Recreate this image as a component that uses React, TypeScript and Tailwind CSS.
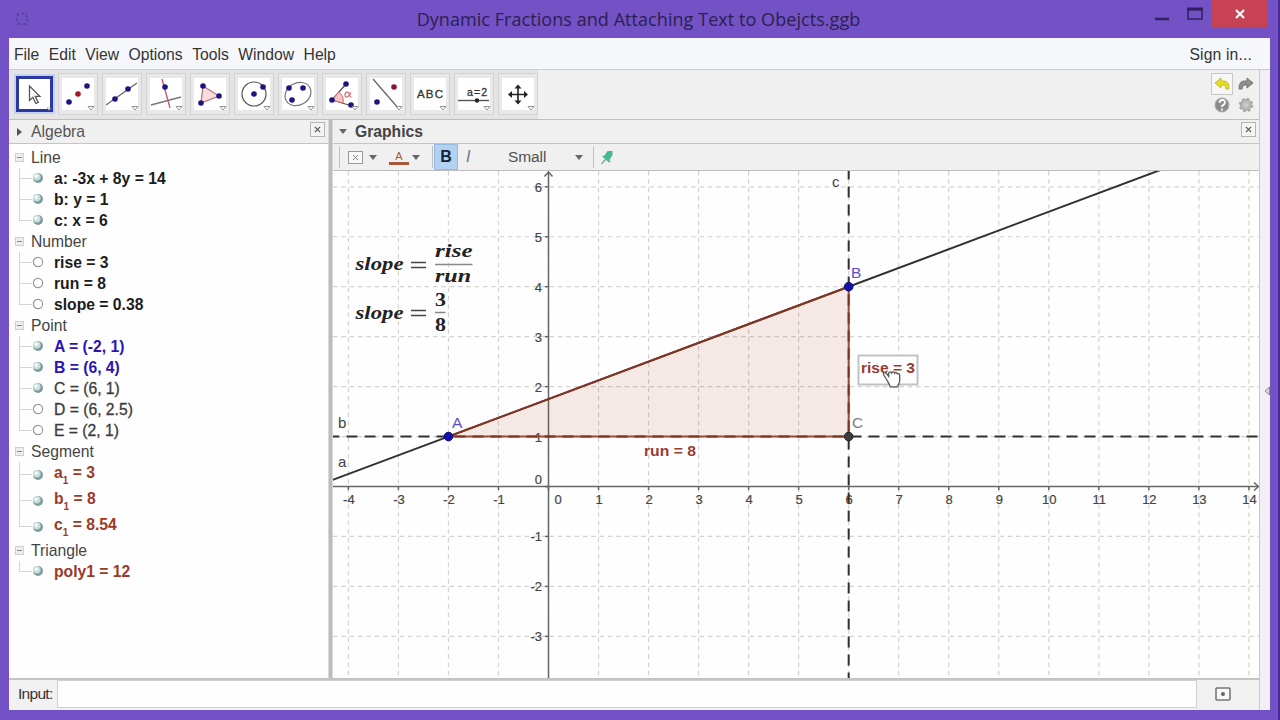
import type { ReactNode } from "react";

type Item = { label: ReactNode; tone: string; shown: boolean; tall?: boolean };
type Group = { title: string; items: Item[] };

const BLACK = "font-bold text-[#1c1c1c]";
const BLUE = "font-bold text-[#2a14b4]";
const GRAY = "text-[#3c3c3c] [-webkit-text-stroke:0.3px_#3c3c3c]";
const RED = "font-bold text-[#9a3a28]";

function Sub({ name, value }: { name: string; value: string }) {
  return (
    <span className="relative -top-0.5">
      {name}
      <span className="relative top-1.5 text-[10px]">1</span> = {value}
    </span>
  );
}

const groups: Group[] = [
  {
    title: "Line",
    items: [
      { label: "a: -3x + 8y = 14", tone: BLACK, shown: true },
      { label: "b: y = 1", tone: BLACK, shown: true },
      { label: "c: x = 6", tone: BLACK, shown: true },
    ],
  },
  {
    title: "Number",
    items: [
      { label: "rise = 3", tone: BLACK, shown: false },
      { label: "run = 8", tone: BLACK, shown: false },
      { label: "slope = 0.38", tone: BLACK, shown: false },
    ],
  },
  {
    title: "Point",
    items: [
      { label: "A = (-2, 1)", tone: BLUE, shown: true },
      { label: "B = (6, 4)", tone: BLUE, shown: true },
      { label: "C = (6, 1)", tone: GRAY, shown: true },
      { label: "D = (6, 2.5)", tone: GRAY, shown: false },
      { label: "E = (2, 1)", tone: GRAY, shown: false },
    ],
  },
  {
    title: "Segment",
    items: [
      { label: <Sub name="a" value="3" />, tone: RED, shown: true, tall: true },
      { label: <Sub name="b" value="8" />, tone: RED, shown: true, tall: true },
      { label: <Sub name="c" value="8.54" />, tone: RED, shown: true, tall: true },
    ],
  },
  {
    title: "Triangle",
    items: [{ label: "poly1 = 12", tone: RED, shown: true }],
  },
];

const menus = ["File", "Edit", "View", "Options", "Tools", "Window", "Help"];

function Dot({ x, y, fill = "#1c1480" }: { x: number; y: number; fill?: string }) {
  return <circle cx={x} cy={y} r="2.8" fill={fill} />;
}

// Each tool is drawn on a 32x32 canvas
const tools: { name: string; art: ReactNode }[] = [
  {
    name: "Move",
    art: (
      <path
        d="M11.5 8v14.5l3.4-3.2 2.9 6.2 2.4-1.1-2.9-6.1h4.6z"
        fill="#fff"
        stroke="#555"
        strokeWidth="1.3"
      />
    ),
  },
  {
    name: "Point",
    art: (
      <>
        <Dot x={7} y={24} />
        <Dot x={16} y={16} fill="#a01830" />
        <Dot x={25} y={8} />
      </>
    ),
  },
  {
    name: "Line",
    art: (
      <>
        <path d="M0 27L31 5" stroke="#666" strokeWidth="1.3" />
        <Dot x={9} y={21} />
        <Dot x={22} y={11} />
      </>
    ),
  },
  {
    name: "Perpendicular Line",
    art: (
      <>
        <path d="M1 27L31 19" stroke="#777" strokeWidth="1.3" />
        <path d="M12 1l8 29" stroke="#c8506a" strokeWidth="1.3" />
        <Dot x={15} y={9} />
      </>
    ),
  },
  {
    name: "Polygon",
    art: (
      <>
        <path d="M9 8l16 10L7 25z" fill="#fadcdc" stroke="#b87880" strokeWidth="1.3" />
        <Dot x={9} y={8} />
        <Dot x={25} y={18} />
        <Dot x={7} y={25} />
      </>
    ),
  },
  {
    name: "Circle",
    art: (
      <>
        <circle cx="16" cy="16" r="12" fill="none" stroke="#555" strokeWidth="1.2" />
        <Dot x={16} y={16} />
        <Dot x={25} y={9} />
      </>
    ),
  },
  {
    name: "Ellipse",
    art: (
      <>
        <ellipse
          cx="16"
          cy="16"
          rx="13.5"
          ry="11"
          fill="none"
          stroke="#777"
          strokeWidth="1.2"
          transform="rotate(-30 16 16)"
        />
        <Dot x={7} y={10} />
        <Dot x={21} y={10} />
        <Dot x={10} y={22} />
      </>
    ),
  },
  {
    name: "Angle",
    art: (
      <>
        <path d="M6 22L20 6M6 22l20 6" stroke="#555" strokeWidth="1.3" />
        <path d="M6 22l7-8a11 11 0 0 1 4 11z" fill="#f6c4c4" stroke="#d07070" />
        <path d="M25 14.500c-2 5-6 6-6 2.500s4-4 4.500 0q.3 2 2 2" fill="none" stroke="#d07070" strokeWidth="1.2" />
        <Dot x={20} y={6} />
        <Dot x={6} y={22} />
        <Dot x={25} y={27} />
      </>
    ),
  },
  {
    name: "Reflect",
    art: (
      <>
        <path d="M3 1l26 30" stroke="#666" strokeWidth="1.3" />
        <Dot x={24} y={9} fill="#8c1430" />
        <Dot x={7} y={24} />
      </>
    ),
  },
  {
    name: "Text",
    art: (
      <text
        x="3"
        y="20"
        fontSize="11.5"
        fill="#333"
        stroke="#333"
        strokeWidth="0.3"
        textLength="26"
        fontFamily="Liberation Sans, sans-serif"
      >
        ABC
      </text>
    ),
  },
  {
    name: "Slider",
    art: (
      <>
        <text
          x="9"
          y="18"
          fontSize="10.5"
          fill="#333"
          stroke="#333"
          strokeWidth="0.3"
          textLength="20"
          fontFamily="Liberation Sans, sans-serif"
        >
          a=2
        </text>
        <path d="M0 22.5h31" stroke="#555" strokeWidth="1.4" />
        <circle cx="19" cy="22.5" r="2.2" fill="#222" />
      </>
    ),
  },
  {
    name: "Move Graphics View",
    art: (
      <>
        <path d="M16 10v13M9.500 16.500h13" stroke="#222" strokeWidth="1.6" />
        <path
          d="M16 6.500l3.500 4h-7zM16 26.500l3.500-4h-7zM6 16.500l4-3.500v7zM26 16.500l-4-3.500v7z"
          fill="#222"
        />
      </>
    ),
  },
];

function ToolButton({ name, art, active }: { name: string; art: ReactNode; active: boolean }) {
  return (
    <button
      type="button"
      aria-label={name}
      className={
        active
          ? "relative flex h-[36px] w-[37px] items-center justify-center border-[3px] border-[#2b38a0] bg-white outline-2 outline-[#c3d0ef]"
          : "relative flex h-[42px] w-[40px] items-center justify-center border border-[#d2d2d2] bg-[#e9e9e9]"
      }
    >
      <svg viewBox="0 0 32 32" className={active ? "h-8 w-8 shrink-0" : "h-8 w-8 shrink-0 bg-white"} fill="none">
        {art}
      </svg>
      <svg
        viewBox="0 0 8 6"
        className={
          active ? "absolute right-[-2px] bottom-[-2px] h-1 w-1.5" : "absolute right-0.5 bottom-[3px] h-1.5 w-2"
        }
      >
        <path d="M1 1.500h6L4 5z" fill="#fff" stroke="#888" strokeWidth="0.9" />
      </svg>
    </button>
  );
}

function CloseBox() {
  return (
    <span className="flex h-[15px] w-[15px] items-center justify-center border border-[#b4b4b4] bg-[#f4f4f4]">
      <svg viewBox="0 0 8 8" className="h-[7px] w-[7px]">
        <path d="M1 1l6 6M7 1L1 7" stroke="#555" strokeWidth="1.4" />
      </svg>
    </span>
  );
}

function Caret() {
  return (
    <svg viewBox="0 0 8 5" className="h-[5px] w-2">
      <path d="M0 0h8L4 5z" fill="#666" />
    </svg>
  );
}

function Marble({ on }: { on: boolean }) {
  return (
    <svg viewBox="0 0 12 12" className="h-3 w-3">
      {on ? (
        <>
          <circle cx="6" cy="6" r="5" fill="#7d9c9e" />
          <circle cx="4.800" cy="4.800" r="3.800" fill="#c9dcdc" />
          <circle cx="4.200" cy="4.200" r="1.800" fill="#f4fafa" />
        </>
      ) : (
        <circle cx="6" cy="6" r="4.600" fill="#fff" stroke="#999" strokeWidth="1.200" />
      )}
    </svg>
  );
}

function AlgebraTree() {
  return (
    <div className="flex flex-1 flex-col bg-[#fefefe] pt-[3px] text-[15.7px]">
      {groups.map((group) => (
        <div key={group.title}>
          <div className="flex h-[21px] items-center pl-1.5 text-[#444]">
            <span className="flex h-[9px] w-[9px] items-center justify-center border border-[#cfcfcf] bg-[#eee]">
              <span className="h-px w-[5px] bg-[#888]" />
            </span>
            <span className="pl-[7px]">{group.title}</span>
          </div>
          {group.items.map((item, i) => (
            <div key={i} className={item.tall ? "flex h-[26px]" : "flex h-[21px]"}>
              <div className="flex w-[23px] flex-col pl-[10px]">
                <div className="h-1/2 border-b border-l border-[#d4d4d4]" />
                <div className={i < group.items.length - 1 ? "h-1/2 border-l border-[#d4d4d4]" : "h-1/2"} />
              </div>
              <div className="flex items-center pb-px">
                <Marble on={item.shown} />
              </div>
              <div className={`flex items-center whitespace-pre pl-[10px] ${item.tone}`}>
                <span>{item.label}</span>
              </div>
            </div>
          ))}
        </div>
      ))}
    </div>
  );
}

const px = (x: number) => 548.5 + x * 50.03;
const py = (y: number) => 486.5 - y * 49.95;
const range = (from: number, to: number) => Array.from({ length: to - from + 1 }, (_, i) => from + i);

const SERIF = "Liberation Serif, serif";

function Fitted({ x, y, width, children }: { x: number; y: number; width: number; children: string }) {
  return (
    <text x={x} y={y} textLength={width} lengthAdjust="spacingAndGlyphs">
      {children}
    </text>
  );
}

function Plot() {
  const A = [px(-2), py(1)];
  const B = [px(6), py(4)];
  const C = [px(6), py(1)];
  return (
    <svg
      viewBox="333 171 926 507"
      className="block h-[507px] w-[926px] bg-[#fefefe]"
      fontFamily="Liberation Sans, sans-serif"
    >
      <g stroke="#d2d2d2" strokeWidth="1.2" strokeDasharray="4.5 3.83">
        {range(-4, 14).map((x) => (
          <path key={x} d={`M${px(x)} 171V678`} />
        ))}
        {range(-3, 6).map((y) => (
          <path key={y} d={`M333 ${py(y)}H1259`} />
        ))}
      </g>

      {/* axes */}
      <g stroke="#666" strokeWidth="1.5" fill="none">
        <path d="M333 486.500H1258M548.500 172V678" />
        <path d="M1254 482.500l4.500 4-4.500 4M544.500 176.500l4-4.500 4 4.500" />
        {range(-4, 14).map((x) => (
          <path key={x} d={`M${px(x)} 486v4`} />
        ))}
        {range(-3, 6).map((y) => (
          <path key={y} d={`M545 ${py(y)}h4`} />
        ))}
      </g>
      <g fontSize="13" fill="#444" stroke="#444" strokeWidth="0.2">
        {range(-4, 14).map((x) => (
          <text key={x} x={x === 0 ? 558 : px(x) + 0.5} y="503.500" textAnchor="middle">
            {x}
          </text>
        ))}
        {range(-3, 6).map((y) => (
          <text key={y} x="542" y={y === 0 ? 484 : py(y) + 5} textAnchor="end">
            {y}
          </text>
        ))}
      </g>

      {/* lines a, b, c */}
      <g stroke="#303030" strokeWidth="2" fill="none">
        <path d={`M${px(-6)} ${py(-0.5)}L${px(14)} ${py(7)}`} />
        <path d={`M333 ${py(1)}H1259`} strokeDasharray="11 7" strokeDashoffset="4.500" />
        <path d={`M${px(6)} 171V678`} strokeDasharray="11 7" strokeDashoffset="2.500" />
      </g>

      <path
        d={`M${A}L${B}L${C}z`}
        fill="#993300"
        fillOpacity="0.1"
        stroke="#8e3420"
        strokeOpacity="0.88"
        strokeWidth="2"
      />
      <circle cx={A[0]} cy={A[1]} r="4.300" fill="#1010b0" stroke="#0a0a60" />
      <circle cx={B[0]} cy={B[1]} r="4.300" fill="#1010b0" stroke="#0a0a60" />
      <circle cx={C[0]} cy={C[1]} r="4.300" fill="#3c3c3c" stroke="#222" />

      <g fontSize="15" fill="#444">
        <text x="832" y="187">c</text>
        <text x="338" y="428">b</text>
        <text x="338" y="467">a</text>
      </g>
      <g fontSize="15.500" fill="#5a4fd0">
        <text x="452" y="428">A</text>
        <text x="851" y="278">B</text>
        <text x="852" y="428" fill="#808080">C</text>
      </g>

      <rect x="858.500" y="355.500" width="59" height="29" fill="#fff" stroke="#bfc3c6" strokeWidth="2" />
      <g fontSize="15" fontWeight="bold" fill="#9a3a34">
        <Fitted x={861} y={373} width={54}>rise = 3</Fitted>
        <Fitted x={644} y={456} width={52}>run = 8</Fitted>
      </g>

      {/* grab cursor */}
      <path
        d="M887.500 381l-4-6.500c-.6-1.800 1.700-2.600 3-1l2.200 2.800v-3.300c.6-1.500 2.400-1.500 3 0 .7-1.500 2.500-1.400 3 .2.800-1.200 2.400-.8 2.600.6 1.300-.6 2.300.2 2.400 1.600v5c0 2.500-1.500 4-2 6.400h-7.500c-.5-2.300-1.700-3.400-2.700-5.800z"
        fill="#fff"
        stroke="#555"
        strokeWidth="1.300"
      />

      <g fontFamily={SERIF} fontSize="19" fontWeight="bold" fill="#222">
        <g fontStyle="italic">
          <Fitted x={355.500} y={270} width={48}>slope</Fitted>
          <Fitted x={435} y={257} width={37.500}>rise</Fitted>
          <Fitted x={435} y={282} width={36}>run</Fitted>
          <Fitted x={355.500} y={319} width={48}>slope</Fitted>
        </g>
        <Fitted x={435} y={305.500} width={11}>3</Fitted>
        <Fitted x={435} y={331} width={11}>8</Fitted>
      </g>
      <path
        d="M411 262.500h15M411 267.500h15M411 310.500h15M411 315.500h15"
        stroke="#444"
        strokeWidth="1.500"
      />
      <path d="M435 264.500h37.500M435 312.500h10.500" stroke="#888" strokeWidth="1.300" />
    </svg>
  );
}

function StyleBar() {
  return (
    <div className="flex h-[27px] items-center border-b border-[#bdbdbd] bg-[#f0f0f0] pl-1.5">
      <span className="h-[22px] w-px bg-[#c0c0c0]" />
      <svg viewBox="0 0 15 13" className="ml-2 h-[13px] w-[15px]">
        <rect x="0.500" y="0.500" width="14" height="12" fill="#f8f8f8" stroke="#999" />
        <path d="M5 4l5 5M10 4L5 9" stroke="#888" />
      </svg>
      <span className="ml-1.5 flex">
        <Caret />
      </span>
      <span className="ml-3 flex h-[15px] w-5 flex-col items-center justify-end border-b-[3px] border-[#a8563a] text-[11px] leading-[11px] text-[#a8563a]">
        A
      </span>
      <span className="ml-[3px] flex">
        <Caret />
      </span>
      <span className="ml-3 h-[22px] w-px bg-[#c0c0c0]" />
      <span className="ml-px flex h-[26px] w-6 items-center justify-center border border-[#94bbe2] bg-[#b3d2f1] text-base font-bold text-[#14223c]">
        B
      </span>
      <span className="ml-2 w-6 text-base leading-5 text-[#667788] italic">I</span>
      <span className="ml-[18px] w-[39px] text-[15.500px] tracking-[-0.1px] text-[#505050]">Small</span>
      <span className="ml-[28px] flex">
        <Caret />
      </span>
      <span className="ml-2.5 h-[22px] w-px bg-[#c0c0c0]" />
      <svg viewBox="0 0 14 15" className="ml-1.5 h-[15px] w-3.5">
        <path d="M7.500 1h5v4l-3 5-6-3z" fill="#43b796" />
        <path d="M3 6l7 6" stroke="#43b796" strokeWidth="2" />
        <path d="M6 9l-4.500 5" stroke="#8aa59c" strokeWidth="1.300" />
      </svg>
    </div>
  );
}

function TitleBar() {
  return (
    <header className="flex h-[38px] items-start justify-between pr-2.5 pl-3.5">
      <svg viewBox="0 0 16 16" className="mt-[11px] h-4 w-4" fill="none" stroke="#584197" strokeWidth="1.500">
        <circle cx="8" cy="8" r="5.500" strokeDasharray="2.500 2.500" />
        <path d="M3 2l1 1M13 2l-1 1M3 14l1-1M13 14l-1-1" />
      </svg>
      <h1 className="mt-[7px] ml-[94px] w-[460px] whitespace-nowrap text-center font-['Open_Sans',sans-serif] text-[18px] leading-6 tracking-[0.06px] text-[#2c2052]">
        Dynamic Fractions and Attaching Text to Obejcts.ggb
      </h1>
      <div className="flex">
        <svg viewBox="0 0 50 24" className="mr-2 h-6 w-[50px]" fill="none" stroke="#302060">
          <path d="M2 19h14" strokeWidth="2.500" />
          <path d="M35 9.500h14v9.500H35z" strokeWidth="1.500" />
          <path d="M34 9h16" strokeWidth="3" />
        </svg>
        <div className="flex h-[27px] w-[57px] items-center justify-center bg-[#c74353]">
          <svg viewBox="0 0 10 10" className="h-2.5 w-2.5">
            <path d="M1 1l8 8M9 1L1 9" stroke="#fff" strokeWidth="2.200" />
          </svg>
        </div>
      </div>
    </header>
  );
}

function ToolBar() {
  return (
    <div className="flex h-[50px] items-center justify-between border-t border-[#cdcdcd] bg-[#f0f0f0]">
      <div className="flex h-full items-center gap-1 bg-[#e4e4e4] pb-px pl-[5px]">
        {tools.map((tool, i) => (
          <div key={tool.name} className="flex w-10 justify-center">
            <ToolButton name={tool.name} art={tool.art} active={i === 0} />
          </div>
        ))}
      </div>
      <div className="mr-0.5 grid grid-cols-[22px_22px] items-center justify-items-center gap-x-0.5 gap-y-0.5 pb-1">
        <span className="flex h-[22px] w-[22px] items-center justify-center border border-[#c8c8c8] bg-[#f6f6f6]">
          <svg viewBox="0 0 16 14" className="h-3.5 w-4">
            <path d="M1 6l6-5v3h3q5 0 5 8h-3q0-4-3-4H7v3z" fill="#e6dc1e" stroke="#c4ba3c" />
          </svg>
        </span>
        <svg viewBox="0 0 16 14" className="h-3.5 w-4">
          <path d="M15 6L9 1v3H6q-5 0-5 8h3q0-4 3-4h2v3z" fill="#8e8e8e" stroke="#777" />
        </svg>
        <svg viewBox="0 0 16 16" className="h-4 w-4">
          <circle cx="8" cy="8" r="7" fill="#8b8b8b" stroke="#aaa" />
          <path d="M5.500 6q0-3 2.800-3t2.600 2.700Q10.500 7.500 8 9v1M8 11.500v2" fill="none" stroke="#fff" strokeWidth="1.800" />
        </svg>
        <svg viewBox="0 0 16 16" className="h-4 w-4">
          <circle cx="8" cy="8" r="6" fill="#b4b4b4" stroke="#aaa" strokeWidth="2.500" strokeDasharray="2.600 2.100" />
          <circle cx="8" cy="8" r="5" fill="#bcbcbc" stroke="#a8a8a8" />
          <circle cx="8" cy="8" r="2" fill="#ccc" />
        </svg>
      </div>
    </div>
  );
}

export default function App() {
  return (
    <div className="flex h-[720px] w-[1280px] flex-col overflow-hidden border-r-2 border-[#4a2a94] bg-[#7252c4] font-['Liberation_Sans',Arial,sans-serif]">
      <TitleBar />
      <div className="ml-[9px] flex h-[672px] w-[1261px] flex-col bg-[#f2eff6]">
        <nav className="flex h-[31px] shrink-0 items-center bg-[#f6f7fa] pr-[18px] pl-[5px] text-[15.700px] text-[#333]">
          <div className="flex flex-1 gap-[9.500px] pt-0.5">
            {menus.map((menu) => (
              <span key={menu}>{menu}</span>
            ))}
          </div>
          <span className="pt-0.5 tracking-[0.15px]">Sign in...</span>
        </nav>

        <div className="flex flex-1">
          <div className="flex w-[1250px] flex-col">
            <ToolBar />

            <div className="flex h-[559px] border-t border-[#bdbdbd]">
              <section className="flex w-[319px] flex-col">
                <div className="flex h-6 items-center justify-between border-b border-[#c4c4c4] bg-[#f0f0f0] pr-[3px] pl-2">
                  <div className="flex items-center gap-[9px] text-[15.700px] text-[#555]">
                    <svg viewBox="0 0 5 8" className="h-2 w-[5px]">
                      <path d="M0 0v8l5-4z" fill="#555" />
                    </svg>
                    Algebra
                  </div>
                  <div className="pb-1">
                    <CloseBox />
                  </div>
                </div>
                <AlgebraTree />
              </section>
              <div className="w-[5px] border-x border-[#d8d8d8] bg-[#bcbcbc]" />
              <section className="flex w-[926px] flex-col">
                <div className="flex h-6 items-center justify-between border-b border-[#c4c4c4] bg-[#f0f0f0] pr-[3px] pl-1.5">
                  <div className="flex items-center gap-2 text-[15.700px] font-bold text-[#444]">
                    <Caret />
                    Graphics
                  </div>
                  <div className="pb-1">
                    <CloseBox />
                  </div>
                </div>
                <StyleBar />
                <Plot />
              </section>
            </div>

            <div className="flex flex-1 items-stretch border-t-2 border-[#c4c4c4] bg-[#f1f1f1] pb-0.5">
              <label
                htmlFor="command"
                className="flex w-[48px] items-center pl-[9px] text-[15.500px] tracking-[-0.7px] text-[#333]"
              >
                Input:
              </label>
              <input
                id="command"
                type="text"
                className="w-[1140px] border border-[#d0d0d0] bg-[#fefefe] px-1 outline-none"
              />
              <div className="flex flex-1 items-center justify-center pr-2.5">
                <svg viewBox="0 0 16 14" className="h-3.5 w-4">
                  <rect x="1" y="1" width="14" height="12" rx="1" fill="#f8f8f8" stroke="#777" strokeWidth="1.600" />
                  <circle cx="8" cy="7" r="2" fill="#666" />
                </svg>
              </div>
            </div>
          </div>

          {/* collapsed side panel */}
          <div className="flex w-[11px] items-center justify-end border-t border-l border-[#c8c8c8] pt-0.5">
            <svg viewBox="0 0 6 10" className="h-2.5 w-1.5">
              <path d="M5.500 1v8L1 5z" fill="#ddd" stroke="#888" />
            </svg>
          </div>
        </div>
      </div>
    </div>
  );
}
